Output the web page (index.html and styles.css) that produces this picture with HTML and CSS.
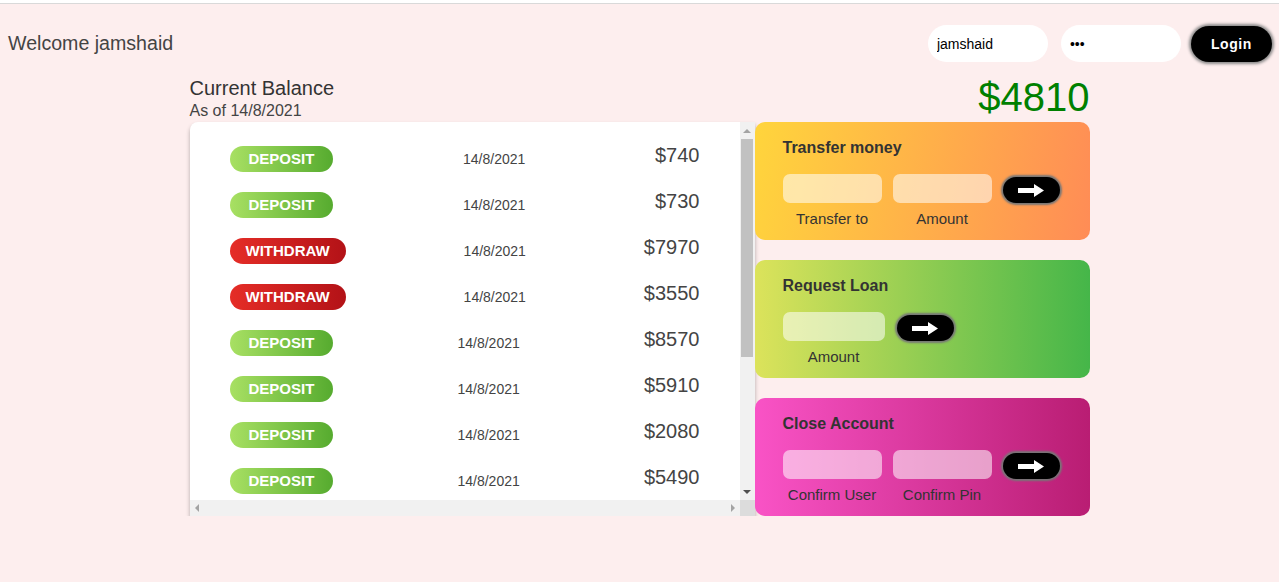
FILE: index.html
```html
<!DOCTYPE html>
<html lang="en">
<head>
    <meta charset="UTF-8">
    <meta name="viewport" content="width=device-width, initial-scale=1.0">
    <title>Bankist</title>
    <link rel="stylesheet" href="styles.css">
</head>
<body>
    <div class="topline"></div>

    <nav class="nav">
        <p class="welcome">Welcome jamshaid</p>
        <form class="login">
            <input type="text" class="login-input" value="jamshaid">
            <input type="password" class="login-input" value="111">
            <button type="button" class="login-btn">Login</button>
        </form>
    </nav>

    <main class="app">
        <div class="balance">
            <div>
                <p class="balance-label">Current Balance</p>
                <p class="balance-date">As of 14/8/2021</p>
            </div>
            <p class="balance-value">$4810</p>
        </div>

        <div class="content">
            <div class="movements">
                <div class="movements-list">
                    <div class="movement-row">
                        <span class="movement-type deposit">DEPOSIT</span>
                        <span class="movement-date">14/8/2021</span>
                        <span class="movement-value">$740</span>
                    </div>
                    <div class="movement-row">
                        <span class="movement-type deposit">DEPOSIT</span>
                        <span class="movement-date">14/8/2021</span>
                        <span class="movement-value">$730</span>
                    </div>
                    <div class="movement-row">
                        <span class="movement-type withdraw">WITHDRAW</span>
                        <span class="movement-date">14/8/2021</span>
                        <span class="movement-value">$7970</span>
                    </div>
                    <div class="movement-row">
                        <span class="movement-type withdraw">WITHDRAW</span>
                        <span class="movement-date">14/8/2021</span>
                        <span class="movement-value">$3550</span>
                    </div>
                    <div class="movement-row">
                        <span class="movement-type deposit">DEPOSIT</span>
                        <span class="movement-date">14/8/2021</span>
                        <span class="movement-value">$8570</span>
                    </div>
                    <div class="movement-row">
                        <span class="movement-type deposit">DEPOSIT</span>
                        <span class="movement-date">14/8/2021</span>
                        <span class="movement-value">$5910</span>
                    </div>
                    <div class="movement-row">
                        <span class="movement-type deposit">DEPOSIT</span>
                        <span class="movement-date">14/8/2021</span>
                        <span class="movement-value">$2080</span>
                    </div>
                    <div class="movement-row">
                        <span class="movement-type deposit">DEPOSIT</span>
                        <span class="movement-date">14/8/2021</span>
                        <span class="movement-value">$5490</span>
                    </div>
                </div>
                <div class="vscroll">
                    <span class="sb-btn"><span class="tri tri-up"></span></span>
                    <span class="sb-thumb"></span>
                    <span class="sb-btn sb-end"><span class="tri tri-down"></span></span>
                </div>
                <div class="hscroll">
                    <span class="tri tri-left"></span>
                    <span class="tri tri-right"></span>
                </div>
                <div class="sb-corner"></div>
            </div>

            <div class="operation operation-transfer">
                <h2>Transfer money</h2>
                <form class="form form-three">
                    <input type="text" class="form-input">
                    <input type="number" class="form-input">
                    <button type="button" class="form-btn">
                        <svg width="26" height="13" viewBox="0 0 26 13"><polygon points="0,4 16,4 16,0 26,6.5 16,13 16,9 0,9" fill="#fff"/></svg>
                    </button>
                    <label class="form-label">Transfer to</label>
                    <label class="form-label">Amount</label>
                </form>
            </div>

            <div class="operation operation-loan">
                <h2>Request Loan</h2>
                <form class="form form-two">
                    <input type="number" class="form-input">
                    <button type="button" class="form-btn">
                        <svg width="26" height="13" viewBox="0 0 26 13"><polygon points="0,4 16,4 16,0 26,6.5 16,13 16,9 0,9" fill="#fff"/></svg>
                    </button>
                    <label class="form-label">Amount</label>
                </form>
            </div>

            <div class="operation operation-close">
                <h2>Close Account</h2>
                <form class="form form-three">
                    <input type="text" class="form-input">
                    <input type="password" class="form-input">
                    <button type="button" class="form-btn">
                        <svg width="26" height="13" viewBox="0 0 26 13"><polygon points="0,4 16,4 16,0 26,6.5 16,13 16,9 0,9" fill="#fff"/></svg>
                    </button>
                    <label class="form-label">Confirm User</label>
                    <label class="form-label">Confirm Pin</label>
                </form>
            </div>
        </div>
    </main>
</body>
</html>
```

FILE: styles.css
```css
* {
    box-sizing: border-box;
}
body {
    margin: 0;
    font-family: "Liberation Sans", Arial, sans-serif;
    color: #444;
    background-color: #fdeeee;
}
p {
    margin: 0;
}
.topline {
    height: 4px;
    background: #fff;
    border-bottom: 1px solid #d9d9d9;
}
.nav {
    display: flex;
    justify-content: space-between;
    align-items: center;
    padding: 21px 7px 12px 8px;
}
.welcome {
    font-size: 19.6px;
}
.login {
    display: flex;
    align-items: center;
}
.login-input {
    width: 120px;
    height: 37px;
    border: none;
    border-radius: 20px;
    padding: 0 9px;
    margin-right: 13px;
    font-family: inherit;
    font-size: 14px;
    color: #000;
    background: #fff;
}
.login-input:last-of-type {
    margin-right: 10px;
}
.login-btn {
    height: 36px;
    padding: 0 20px;
    border: none;
    border-radius: 20px;
    background: #000;
    color: #fff;
    font-family: inherit;
    font-size: 14px;
    font-weight: bold;
    letter-spacing: 0.6px;
    box-shadow: 0 0 3px 2px #8a8a8a;
    cursor: pointer;
}
.app {
    width: 900px;
    margin: 0 auto;
}
.balance {
    display: flex;
    justify-content: space-between;
    align-items: flex-end;
    margin-bottom: 2px;
}
.balance-label {
    font-size: 20px;
    line-height: 27px;
    color: #333;
}
.balance-date {
    font-size: 16px;
    color: #444;
}
.balance-value {
    font-size: 40px;
    color: green;
    line-height: 46px;
}
.content {
    display: grid;
    grid-template-columns: 565px 335px;
    grid-template-rows: repeat(3, 118px);
    row-gap: 20px;
}

/* movements list with classic scrollbars */
.movements {
    grid-row: 1 / span 3;
    display: grid;
    grid-template-columns: 1fr 15px;
    grid-template-rows: 1fr 16px;
    background: #fff;
    border-top-left-radius: 8px;
    overflow: hidden;
    box-shadow: 0 3px 4px rgba(0, 0, 0, 0.3);
}
.movements-list {
    overflow: hidden;
    padding-top: 14px;
}
.movement-row {
    display: flex;
    align-items: center;
    padding: 10px 40px;
}
.movement-type {
    height: 26px;
    line-height: 26px;
    padding: 0 19px;
    border-radius: 13px;
    color: #fff;
    font-size: 15px;
    font-weight: bold;
}
.deposit {
    background-image: linear-gradient(to right, #a8e063, #56ab2f);
}
.withdraw {
    padding: 0 16px;
    background-image: linear-gradient(to right, #e52d27, #b31217);
}
.movement-date {
    margin-left: auto;
    font-size: 14px;
}
.movement-value {
    margin-left: auto;
    margin-bottom: 8px;
    font-size: 20px;
    line-height: 14px;
}
.vscroll {
    display: flex;
    flex-direction: column;
    align-items: center;
    background: #f1f1f1;
}
.sb-btn {
    height: 17px;
    width: 100%;
    display: flex;
    align-items: center;
    justify-content: center;
}
.sb-end {
    margin-top: auto;
}
.sb-thumb {
    width: 12px;
    height: 218px;
    background: #c1c1c1;
}
.hscroll {
    display: flex;
    justify-content: space-between;
    align-items: center;
    padding: 0 5px;
    background: #f1f1f1;
}
.sb-corner {
    background: #dcdcdc;
}
.tri {
    width: 0;
    height: 0;
}
.tri-up {
    border-left: 4px solid transparent;
    border-right: 4px solid transparent;
    border-bottom: 4px solid #a3a3a3;
}
.tri-down {
    border-left: 4px solid transparent;
    border-right: 4px solid transparent;
    border-top: 4px solid #505050;
}
.tri-left {
    border-top: 4px solid transparent;
    border-bottom: 4px solid transparent;
    border-right: 4px solid #a3a3a3;
}
.tri-right {
    border-top: 4px solid transparent;
    border-bottom: 4px solid transparent;
    border-left: 4px solid #a3a3a3;
}

/* operations */
.operation {
    border-radius: 10px;
    padding: 17px 28px 0;
}
.operation h2 {
    margin: 0 0 17px;
    font-size: 16px;
    color: #333;
}
.operation-transfer {
    background-image: linear-gradient(100deg, #ffd53c, #ff8c56);
}
.operation-loan {
    background-image: linear-gradient(to right, #dce35b, #45b649);
}
.operation-close {
    background-image: linear-gradient(to right, #f953c6, #b91d73);
}
.form {
    display: grid;
    column-gap: 11px;
    row-gap: 7px;
}
.form-three {
    grid-template-columns: 99px 99px 57px;
}
.form-two {
    grid-template-columns: 102px 57px;
    column-gap: 12px;
}
.form-input {
    height: 29px;
    border: none;
    border-radius: 7px;
    background: rgba(255, 255, 255, 0.55);
    font-family: inherit;
    font-size: 14px;
}
.form-btn {
    align-self: start;
    margin-top: 3px;
    height: 26px;
    border: none;
    border-radius: 13px;
    background: #000;
    box-shadow: 0 0 2px 2px #777;
    display: flex;
    align-items: center;
    justify-content: center;
    padding: 0;
    cursor: pointer;
}
.form-label {
    font-size: 15px;
    color: #333;
    text-align: center;
}
```
